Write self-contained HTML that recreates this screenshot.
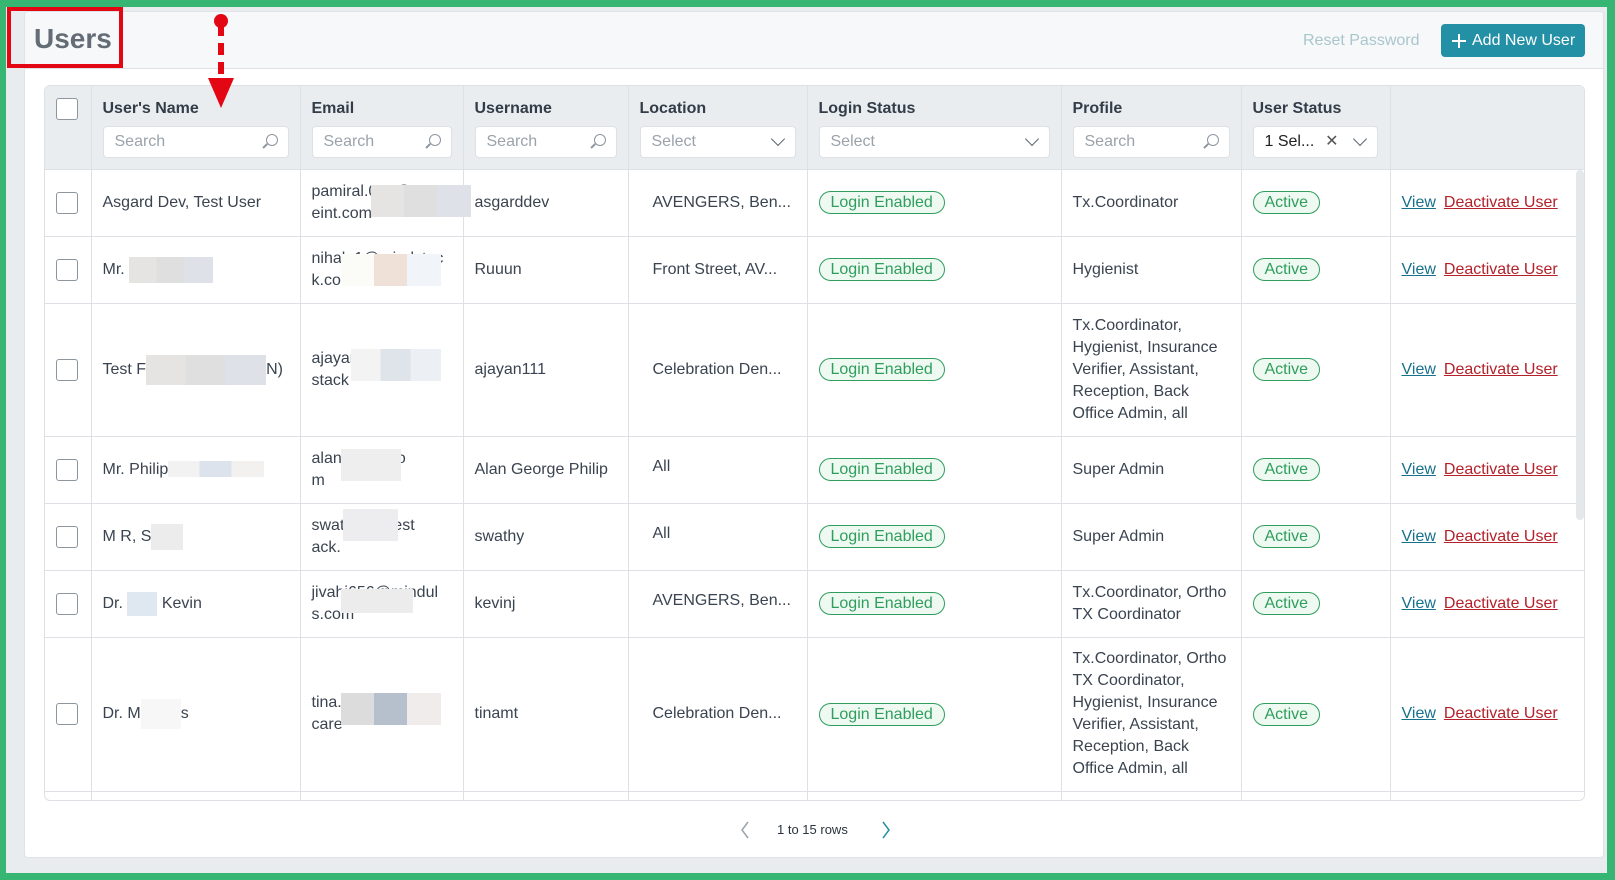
<!DOCTYPE html>
<html><head><meta charset="utf-8"><style>
*{box-sizing:border-box;margin:0;padding:0}
body{width:1615px;height:880px;background:#37b673;font-family:"Liberation Sans",sans-serif;color:#3a4450;position:relative;overflow:hidden}
.page{position:absolute;left:6px;top:7px;width:1601px;height:866px;background:#e9ecef}
.card{position:absolute;left:18px;top:4px;width:1580px;height:847px;background:#fff;border:1px solid #dfe3e8;border-radius:4px;overflow:hidden}
.hdr{position:absolute;left:0;top:0;width:100%;height:57px;background:#f7f8fa;border-bottom:1px solid #dfe3e8}
.title{position:absolute;left:9px;top:11px;font-size:28px;font-weight:bold;color:#646c75}
.redbox{position:absolute;left:7px;top:7px;width:116px;height:61px;border:4px solid #e30613}
.reset{position:absolute;left:1278px;top:20px;font-size:16px;color:#a9c6cd}
.btn{position:absolute;left:1416px;top:12px;width:144px;height:33px;background:#2390a6;border-radius:4px;color:#fff;font-size:16px;line-height:33px;padding-left:31px}
.btn:before{content:"";position:absolute;left:11px;width:14px;height:2px;background:#fff;top:16px}
.btn:after{content:"";position:absolute;left:17px;top:10px;width:2px;height:14px;background:#fff}
.tbl{position:absolute;left:44px;top:85px;width:1541px;height:716px;border:1px solid #dde1e6;border-radius:6px;overflow:hidden}
table{border-collapse:collapse;table-layout:fixed;width:1540px}
td,th{border-right:1px solid #dde1e6;border-bottom:1px solid #dde1e6;font-size:16px;vertical-align:middle;text-align:left;font-weight:normal;color:#3a4450;line-height:22px}
th{background:#eaedf0;height:83px;vertical-align:top;padding:12px 11px 0;font-weight:bold;color:#333d48}
td{padding:0 11px}
.cb{width:22px;height:22px;border:1.5px solid #8d959e;border-radius:3px;background:#fff}
.inp{margin-top:6px;height:32px;background:#fff;border:1px solid #dde1e6;border-radius:4px;font-weight:normal;color:#9aa3ab;font-size:16px;line-height:30px;padding-left:11px;position:relative}
.mag{position:absolute;right:10px;top:7px;width:12px;height:12px;border:1.5px solid #8d959e;border-radius:50%}
.mag:after{content:"";position:absolute;left:-5px;top:10px;width:6px;height:1.5px;background:#8d959e;transform:rotate(-45deg)}
.chev{position:absolute;right:12px;top:7px;width:10px;height:10px;border-right:1.5px solid #5c6670;border-bottom:1.5px solid #5c6670;transform:rotate(45deg)}
.badge{display:inline-block;border:1.5px solid #2f9e5c;background:#eef9f2;color:#2f9e5c;border-radius:12px;padding:0 11px;line-height:21px;font-size:16px;vertical-align:middle}
.loc{padding-left:24px}
a{font-size:16px}
.v{color:#17708c;text-decoration:underline;margin-right:8px}
.d{color:#b3212a;text-decoration:underline}
.blur{display:inline-block;vertical-align:middle;height:30px;background:linear-gradient(90deg,#e5e4e2 0 33%,#dfdfe0 33% 66%,#dfe1e8 66%)}
.sb{position:absolute;right:0;top:84px;width:8px;height:350px;background:#e5e8eb;border-radius:4px}
.pg{position:absolute;left:777px;top:822px;font-size:13px;color:#2a333d}
.pg svg{position:absolute;top:-1px}
.arrow{position:absolute;left:208px;top:12px}
</style></head><body>
<div class="page">
<div class="card">
<div class="hdr"><div class="title">Users</div><div class="reset">Reset Password</div><div class="btn">Add New User</div></div>
</div>
</div>
<div class="redbox"></div>
<div class="tbl">
<table>
<colgroup><col style="width:46px"><col style="width:209px"><col style="width:163px"><col style="width:165px"><col style="width:179px"><col style="width:254px"><col style="width:180px"><col style="width:149px"><col style="width:195px"></colgroup>
<tr><th style="padding-left:11px"><div class="cb"></div></th>
<th>User's Name<div class="inp">Search<span class="mag"></span></div></th>
<th>Email<div class="inp">Search<span class="mag"></span></div></th>
<th>Username<div class="inp">Search<span class="mag"></span></div></th>
<th>Location<div class="inp">Select<span class="chev"></span></div></th>
<th>Login Status<div class="inp">Select<span class="chev"></span></div></th>
<th>Profile<div class="inp">Search<span class="mag"></span></div></th>
<th>User Status<div class="inp" style="color:#222;width:125px">1 Sel...<span style="position:absolute;right:38px;top:0;color:#555;font-weight:normal">✕</span><span class="chev"></span></div></th>
<th style="border-right:none"></th></tr>
<tr style="height:67px"><td><div class="cb"></div></td><td>Asgard Dev, Test User</td><td style="position:relative">pamiral.000@mc<br>eint.com<span class="blur" style="position:absolute;left:70px;top:15px;width:100px;height:32px"></span></td><td>asgarddev</td><td class="loc">AVENGERS, Ben...</td><td><span class="badge">Login Enabled</span></td><td>Tx.Coordinator</td><td><span class="badge">Active</span></td><td><a class="v">View</a><a class="d">Deactivate User</a></td></tr>
<tr style="height:67px"><td><div class="cb"></div></td><td>Mr. <span class="blur" style="width:84px;height:26px"></span></td><td style="position:relative">nihal..1@mindstac<br>k.com<span class="blur" style="position:absolute;left:40px;top:17px;width:100px;height:32px;background:linear-gradient(90deg,#fbfcf8 0 33%,#efe1d8 33% 66%,#f1f5f9 66%)"></span></td><td>Ruuun</td><td class="loc">Front Street, AV...</td><td><span class="badge">Login Enabled</span></td><td>Hygienist</td><td><span class="badge">Active</span></td><td><a class="v">View</a><a class="d">Deactivate User</a></td></tr>
<tr style="height:133px"><td><div class="cb"></div></td><td>Test F<span class="blur" style="width:120px;height:30px"></span>N)</td><td style="position:relative">ajayan.@mcare<br>stack<span class="blur" style="position:absolute;left:50px;top:45px;width:90px;height:32px;background:linear-gradient(90deg,#f3f3f3 0 33%,#dfe3ea 33% 66%,#eceff3 66%)"></span></td><td>ajayan111</td><td class="loc">Celebration Den...</td><td><span class="badge">Login Enabled</span></td><td>Tx.Coordinator,<br>Hygienist, Insurance<br>Verifier, Assistant,<br>Reception, Back<br>Office Admin, all</td><td><span class="badge">Active</span></td><td><a class="v">View</a><a class="d">Deactivate User</a></td></tr>
<tr style="height:67px"><td><div class="cb"></div></td><td>Mr. Philip<span class="blur" style="width:96px;height:16px;background:linear-gradient(90deg,#f2f2f2 0 33%,#dde3ec 33% 66%,#f3f1ef 66%)"></span></td><td style="position:relative">alan......ck.co<br>m<span class="blur" style="position:absolute;left:40px;top:12px;width:60px;height:32px;background:#eeeeee"></span></td><td>Alan George Philip</td><td class="loc" style="padding-bottom:6px">All</td><td><span class="badge">Login Enabled</span></td><td>Super Admin</td><td><span class="badge">Active</span></td><td><a class="v">View</a><a class="d">Deactivate User</a></td></tr>
<tr style="height:67px"><td><div class="cb"></div></td><td>M R, S<span class="blur" style="width:32px;height:26px;background:#ececec"></span></td><td style="position:relative">swat......carest<br>ack.<span class="blur" style="position:absolute;left:42px;top:5px;width:55px;height:32px;background:#ededf0"></span></td><td>swathy</td><td class="loc" style="padding-bottom:6px">All</td><td><span class="badge">Login Enabled</span></td><td>Super Admin</td><td><span class="badge">Active</span></td><td><a class="v">View</a><a class="d">Deactivate User</a></td></tr>
<tr style="height:67px"><td><div class="cb"></div></td><td>Dr. <span class="blur" style="width:30px;height:24px;background:#dfe7f0"></span> Kevin</td><td style="position:relative">jivahi656@mindul<br>s.com<span class="blur" style="position:absolute;left:40px;top:18px;width:72px;height:24px;background:#ececec"></span></td><td>kevinj</td><td class="loc" style="padding-bottom:6px">AVENGERS, Ben...</td><td><span class="badge">Login Enabled</span></td><td>Tx.Coordinator, Ortho<br>TX Coordinator</td><td><span class="badge">Active</span></td><td><a class="v">View</a><a class="d">Deactivate User</a></td></tr>
<tr style="height:154px"><td><div class="cb"></div></td><td>Dr. M<span class="blur" style="width:40px;height:30px;background:#f7f7f7"></span>s</td><td style="position:relative">tina.......@<br>care<span class="blur" style="position:absolute;left:40px;top:55px;width:100px;height:32px;background:linear-gradient(90deg,#dcdcdc 0 33%,#b6bfcc 33% 66%,#efeceb 66%)"></span></td><td>tinamt</td><td class="loc">Celebration Den...</td><td><span class="badge">Login Enabled</span></td><td>Tx.Coordinator, Ortho<br>TX Coordinator,<br>Hygienist, Insurance<br>Verifier, Assistant,<br>Reception, Back<br>Office Admin, all</td><td><span class="badge">Active</span></td><td><a class="v">View</a><a class="d">Deactivate User</a></td></tr>
<tr style="height:40px"><td></td><td></td><td></td><td></td><td></td><td></td><td></td><td></td><td></td></tr>
</table>
<div class="sb"></div>
</div>
<div class="pg"><svg style="left:-37px" width="10" height="18" viewBox="0 0 10 18"><path d="M8 1 L2 9 L8 17" fill="none" stroke="#9aa3ab" stroke-width="1.5"/></svg>1 to 15 rows<svg style="left:104px" width="10" height="18" viewBox="0 0 10 18"><path d="M2 1 L8 9 L2 17" fill="none" stroke="#2390a6" stroke-width="1.5"/></svg></div>
<svg class="arrow" width="30" height="100" viewBox="0 0 30 100"><circle cx="13" cy="9" r="7" fill="#e30613"/><line x1="13" y1="12" x2="13" y2="68" stroke="#e30613" stroke-width="6" stroke-dasharray="12,7"/><polygon points="0,66 26,66 13,96" fill="#e30613"/></svg>
</body></html>
